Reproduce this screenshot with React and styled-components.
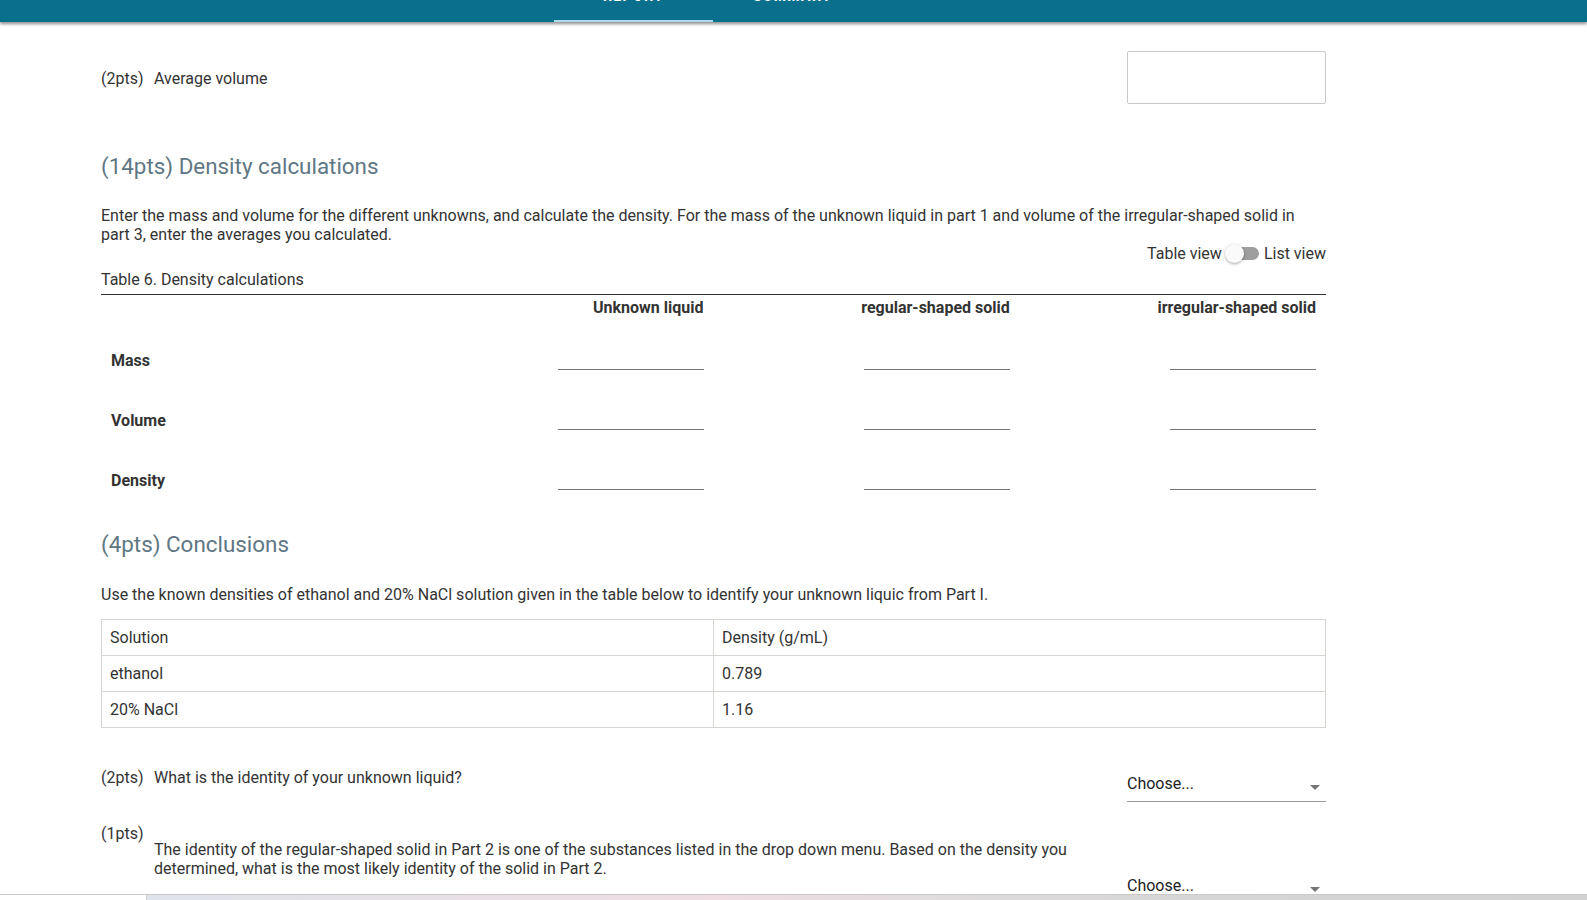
import styled, { createGlobalStyle } from 'styled-components';

const Global = createGlobalStyle`
  html, body {
    margin: 0;
    padding: 0;
    background: #fff;
    overflow: hidden;
    height: 900px;
  }
  body {
    font-family: Roboto, "Noto Sans", Arial, sans-serif;
    color: #333;
    font-size: 16px;
  }
`;

const Header = styled.header`
  height: 22px;
  background: #0a6f8c;
  box-shadow: 0 2px 3px rgba(0, 0, 0, 0.45);
  display: flex;
  padding-left: 554px;
  position: relative;
  z-index: 2;
`;

const Tab = styled.div`
  width: 159px;
  height: 22px;
  overflow: hidden;
  box-sizing: border-box;
  border-bottom: 2px solid ${p => (p.$active ? '#a9dbeb' : 'transparent')};
  display: flex;
  justify-content: center;
`;

const TabLabel = styled.span`
  color: #fff;
  font-weight: 700;
  font-size: 14px;
  letter-spacing: 1.4px;
  line-height: 16px;
  margin-top: -12px;
`;

const Main = styled.main`
  width: 1225px;
  padding: 29px 0 0 101px;
`;

const PointsRow = styled.div`
  display: flex;
  align-items: ${p => p.$align || 'center'};
  justify-content: space-between;
  margin-bottom: ${p => p.$mb || 0}px;
`;

const Question = styled.div`
  display: flex;
  align-items: baseline;
  line-height: 19px;
`;

const Pts = styled.span`
  width: 53px;
  flex-shrink: 0;
`;

const NumberBox = styled.div`
  width: 197px;
  height: 51px;
  border: 1px solid #c8c8c8;
  border-radius: 2px;
`;

const Heading = styled.h2`
  font-size: 22.4px;
  font-weight: 400;
  color: #5f7784;
  margin: 0;
  line-height: 26px;
`;

const Para = styled.p`
  margin: 0;
  line-height: 19px;
`;

const ToggleRow = styled.div`
  display: flex;
  justify-content: flex-end;
  align-items: center;
  gap: 5px;
  line-height: 19px;
`;

const Track = styled.span`
  position: relative;
  width: 28px;
  height: 13px;
  border-radius: 7px;
  background: #9e9e9e;
  margin-left: 4px;
`;

const Thumb = styled.span`
  position: absolute;
  left: -6px;
  top: -3px;
  width: 19px;
  height: 19px;
  border-radius: 50%;
  background: #fafafa;
  box-shadow: 0 1px 3px rgba(0, 0, 0, 0.35);
`;

const Caption = styled.div`
  line-height: 19px;
  padding-bottom: 5px;
  border-bottom: 1px solid #333;
`;

const CalcGrid = styled.div`
  display: grid;
  grid-template-columns: repeat(4, 1fr);
  grid-template-rows: 30px;
  grid-auto-rows: 60px;
`;

const ColHead = styled.div`
  font-weight: 700;
  text-align: right;
  padding: 3px 10px 0 0;
  line-height: 19px;
`;

const RowLabel = styled.div`
  font-weight: 700;
  padding: 26px 0 0 10px;
  line-height: 19px;
`;

const Cell = styled.div`
  display: flex;
  justify-content: flex-end;
  align-items: flex-end;
  padding: 0 10px 15px 0;
`;

const Blank = styled.span`
  width: 146px;
  border-bottom: 1px solid #777;
`;

const DataTable = styled.table`
  width: 100%;
  border-collapse: collapse;
  margin-top: 15px;

  td {
    width: 50%;
    border: 1px solid #d6d6d1;
    height: 35px;
    padding: 0 8px;
    line-height: 19px;
  }
`;

const Select = styled.div`
  width: 199px;
  box-sizing: border-box;
  display: flex;
  justify-content: space-between;
  align-items: center;
  padding: 0 6px 0 0;
  height: ${p => p.$h || 34}px;
  border-bottom: ${p => (p.$line ? '1px solid #9a9a9a' : 'none')};
  color: #222;
`;

const Caret = styled.span`
  width: 0;
  height: 0;
  border-left: 5px solid transparent;
  border-right: 5px solid transparent;
  border-top: 5px solid #757575;
  margin-top: 8px;
`;

const LongQuestion = styled.div`
  display: flex;
  line-height: 19px;
`;

const LongText = styled.div`
  width: 940px;
  padding-top: 16px;
`;

const Footer = styled.div`
  position: fixed;
  left: 0;
  right: 0;
  bottom: 0;
  height: 5px;
  display: flex;
  border-top: 1px solid #c9c9c9;
  background: #d8d8d8;
`;

const FooterTab = styled.div`
  width: 146px;
  background: #fff;
  border-right: 1px solid #ccc;
`;

const FooterFill = styled.div`
  flex: 1;
  background: linear-gradient(90deg, #dfe3ea 0%, #efdde3 40%, #e0dcdd 55%, #d5d5d5 75%, #d2d2d2 100%);
`;

const calcRows = ['Mass', 'Volume', 'Density'];

export default function App() {
  return (
    <>
      <Global />
      <Header>
        <Tab $active><TabLabel>REPORT</TabLabel></Tab>
        <Tab><TabLabel>SUMMARY</TabLabel></Tab>
      </Header>
      <Main>
        <PointsRow $mb={49}>
          <Question style={{ paddingTop: 2 }}><Pts>(2pts)</Pts>Average volume</Question>
          <NumberBox />
        </PointsRow>

        <Heading>(14pts) Density calculations</Heading>
        <Para style={{ marginTop: 27 }}>
          Enter the mass and volume for the different unknowns, and calculate the density. For the mass of the unknown liquid in part 1 and volume of the irregular-shaped solid in part 3, enter the averages you calculated.
        </Para>
        <ToggleRow>
          Table view
          <Track><Thumb /></Track>
          List view
        </ToggleRow>
        <Caption style={{ marginTop: 7 }}>Table 6. Density calculations</Caption>
        <CalcGrid>
          <div />
          <ColHead>Unknown liquid</ColHead>
          <ColHead>regular-shaped solid</ColHead>
          <ColHead>irregular-shaped solid</ColHead>
          {calcRows.map(r => (
            <>
              <RowLabel key={r}>{r}</RowLabel>
              <Cell><Blank /></Cell>
              <Cell><Blank /></Cell>
              <Cell><Blank /></Cell>
            </>
          ))}
        </CalcGrid>

        <Heading style={{ marginTop: 26 }}>(4pts) Conclusions</Heading>
        <Para style={{ marginTop: 28 }}>
          Use the known densities of ethanol and 20% NaCl solution given in the table below to identify your unknown liquic from Part I.
        </Para>
        <DataTable>
          <tbody>
            <tr><td>Solution</td><td>Density (g/mL)</td></tr>
            <tr><td>ethanol</td><td>0.789</td></tr>
            <tr><td>20% NaCl</td><td>1.16</td></tr>
          </tbody>
        </DataTable>

        <PointsRow $align="flex-start" style={{ marginTop: 38 }}>
          <Question style={{ paddingTop: 2 }}><Pts>(2pts)</Pts>What is the identity of your unknown liquid?</Question>
          <Select $line $h={36}>Choose...<Caret /></Select>
        </PointsRow>

        <PointsRow $align="flex-end" style={{ marginTop: 22 }}>
          <LongQuestion>
            <Pts>(1pts)</Pts>
            <LongText>
              The identity of the regular-shaped solid in Part 2 is one of the substances listed in the drop down menu. Based on the density you determined, what is the most likely identity of the solid in Part 2.
            </LongText>
          </LongQuestion>
          <Select $h={24} style={{ marginBottom: -19 }}>Choose...<Caret /></Select>
        </PointsRow>
      </Main>
      <Footer>
        <FooterTab />
        <FooterFill />
      </Footer>
    </>
  );
}
